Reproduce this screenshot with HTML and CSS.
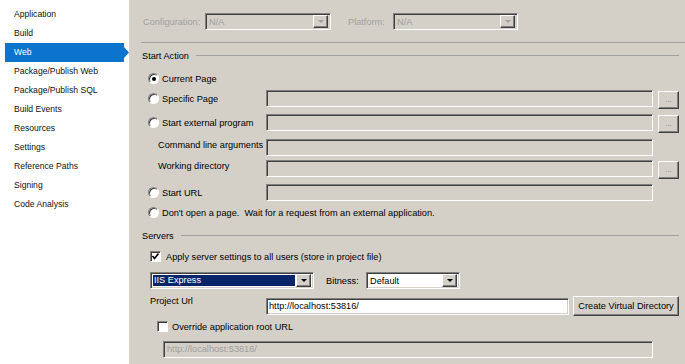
FILE: index.html
```html
<!DOCTYPE html>
<html lang="en">
<head>
    <meta charset="UTF-8">
    <meta name="viewport" content="width=device-width, initial-scale=1.0">
    <title>Web - Project Properties</title>
    <link rel="stylesheet" href="styles.css">
</head>
<body>

    <div class="window">
        <nav class="sidebar">
            <a class="nav-item">Application</a>
            <a class="nav-item">Build</a>
            <a class="nav-item active">Web</a>
            <a class="nav-item">Package/Publish Web</a>
            <a class="nav-item">Package/Publish SQL</a>
            <a class="nav-item">Build Events</a>
            <a class="nav-item">Resources</a>
            <a class="nav-item">Settings</a>
            <a class="nav-item">Reference Paths</a>
            <a class="nav-item">Signing</a>
            <a class="nav-item">Code Analysis</a>
        </nav>

        <main class="page">
            <div class="config-bar">
                <span class="config-label">Configuration:</span>
                <div class="combo disabled config-combo">
                    <span class="value">N/A</span>
                    <span class="drop"></span>
                </div>
                <span class="config-label platform-label">Platform:</span>
                <div class="combo disabled platform-combo">
                    <span class="value">N/A</span>
                    <span class="drop"></span>
                </div>
            </div>

            <div class="rule"></div>

            <div class="group-title start-title"><span>Start Action</span></div>

            <div class="action-row first">
                <label class="choice"><span class="radio checked"></span>Current Page</label>
            </div>
            <div class="action-row gap-s">
                <label class="choice"><span class="radio"></span>Specific Page</label>
                <div class="field"></div>
                <button class="browse">...</button>
            </div>
            <div class="action-row gap-m">
                <label class="choice"><span class="radio"></span>Start external program</label>
                <div class="field"></div>
                <button class="browse">...</button>
            </div>
            <div class="action-row gap-l">
                <span class="sublabel">Command line arguments</span>
                <div class="field"></div>
            </div>
            <div class="action-row gap-xs">
                <span class="sublabel">Working directory</span>
                <div class="field"></div>
                <button class="browse">...</button>
            </div>
            <div class="action-row gap-m">
                <label class="choice"><span class="radio"></span>Start URL</label>
                <div class="field"></div>
            </div>
            <div class="action-row gap-s">
                <label class="choice wide"><span class="radio"></span>Don't open a page.&nbsp; Wait for a request from an external application.</label>
            </div>

            <div class="group-title servers-title"><span>Servers</span></div>

            <div class="check-row apply-row">
                <span class="checkbox checked">
                    <svg width="9" height="9" viewBox="0 0 9 9"><path d="M1.5 4 L3.5 6.5 L7.5 1.5" fill="none" stroke="#000" stroke-width="1.6"/></svg>
                </span>
                Apply server settings to all users (store in project file)
            </div>

            <div class="server-row">
                <div class="combo selected server-combo">
                    <span class="value">IIS Express</span>
                    <span class="drop"></span>
                </div>
                <span class="bitness-label">Bitness:</span>
                <div class="combo white bitness-combo">
                    <span class="value">Default</span>
                    <span class="drop"></span>
                </div>
            </div>

            <div class="url-row">
                <span class="url-label">Project Url</span>
                <div class="field white url-field">http://localhost:53816/</div>
                <button class="push">Create Virtual Directory</button>
            </div>

            <div class="check-row override-row">
                <span class="checkbox"></span>
                Override application root URL
            </div>

            <div class="field root-field">http://localhost:53816/</div>
        </main>
    </div>

</body>
</html>
```

FILE: styles.css
```css
body {
    margin: 0;
    font-family: "Liberation Sans", Arial, sans-serif;
    font-size: 9.2px;
    color: #000;
}
.window {
    display: flex;
    width: 685px;
    height: 364px;
    overflow: hidden;
    background-color: #d4d0c8;
}
.sidebar {
    width: 129px;
    flex-shrink: 0;
    background-color: #fff;
    padding-top: 5px;
}
.nav-item {
    display: block;
    height: 19px;
    line-height: 19px;
    padding-left: 14px;
    font-size: 8.6px;
    color: #111;
}
.nav-item.active {
    margin-left: 5px;
    padding-left: 9px;
    background-color: #0c74cc;
    color: #fff;
    clip-path: polygon(0 0, 119px 0, 119px 4px, 124px 9.5px, 119px 15px, 119px 100%, 0 100%);
}
.page {
    flex: 1;
    padding: 13px 0 0 12px;
}

/* config bar */
.config-bar {
    display: flex;
    align-items: center;
    height: 17px;
}
.config-label {
    color: #a0a0a0;
    width: 64px;
    padding-left: 2px;
    box-sizing: border-box;
}
.platform-label {
    margin-left: 17px;
    width: 45px;
    padding-left: 0;
}
.config-combo {
    width: 126px;
}
.platform-combo {
    width: 125px;
}
.rule {
    margin-top: 12px;
    border-top: 1px solid #a0a0a0;
}

/* group headings */
.group-title {
    display: flex;
    align-items: center;
    height: 13px;
    padding-left: 1px;
    margin-right: 6px;
}
.group-title::after {
    content: "";
    flex: 1;
    border-top: 1px solid #a0a0a0;
    margin-left: 7px;
}
.start-title {
    margin-top: 6px;
}
.servers-title {
    margin-top: 8px;
}

/* sunken / raised widgets */
.field, .combo {
    box-sizing: border-box;
    height: 17px;
    border: 1px solid;
    border-color: #808080 #fff #fff #808080;
    box-shadow: inset 1px 1px #404040, inset -1px -1px #d4d0c8;
}
.field.white, .combo.white, .combo.selected {
    background-color: #fff;
}
.browse, .push, .drop {
    box-sizing: border-box;
    border: 1px solid;
    border-color: #fff #404040 #404040 #fff;
    box-shadow: inset -1px -1px #808080, inset 1px 1px #d4d0c8;
    background-color: #d4d0c8;
    font-family: inherit;
    padding: 0;
}
.combo {
    display: flex;
    align-items: center;
    padding: 0 2px 0 3px;
}
.combo .value {
    flex: 1;
}
.combo.disabled .value {
    color: #a0a0a0;
}
.combo.selected {
    padding-left: 2px;
}
.combo.selected .value {
    background-color: #0a246a;
    color: #fff;
    line-height: 11px;
    padding-left: 1px;
    margin-right: 1px;
}
.drop {
    position: relative;
    width: 15px;
    height: 13px;
}
.drop::after {
    content: "";
    position: absolute;
    left: 4px;
    top: 4px;
    border-left: 3px solid transparent;
    border-right: 3px solid transparent;
    border-top: 3px solid #000;
}
.combo.disabled .drop::after {
    border-top-color: #a0a0a0;
}

/* start action */
.action-row {
    display: flex;
    align-items: center;
    height: 17px;
}
.action-row.first { margin-top: 8px; }
.action-row.gap-xs { margin-top: 4px; }
.action-row.gap-s { margin-top: 3px; }
.action-row.gap-m { margin-top: 7px; }
.action-row.gap-l { margin-top: 8px; }
.choice {
    display: flex;
    align-items: center;
    width: 125px;
    padding-left: 7px;
    box-sizing: border-box;
    white-space: nowrap;
}
.choice.wide {
    width: auto;
}
.radio {
    position: relative;
    box-sizing: border-box;
    width: 11px;
    height: 11px;
    margin-right: 3px;
    border-radius: 50%;
    border: 1px solid;
    border-color: #808080 #fff #fff #808080;
    box-shadow: inset 1px 1px #404040;
    background-color: #fff;
}
.radio.checked::after {
    content: "";
    position: absolute;
    left: 3px;
    top: 3px;
    width: 4px;
    height: 4px;
    border-radius: 50%;
    background-color: #000;
}
.sublabel {
    align-self: flex-start;
    width: 125px;
    padding-left: 17px;
    box-sizing: border-box;
    line-height: 12px;
    white-space: nowrap;
}
.action-row .field {
    width: 387px;
}
.browse {
    width: 21px;
    height: 18px;
    margin-left: 5px;
    margin-top: 2px;
    font-size: 8px;
    color: #808080;
    line-height: 14px;
}

/* servers */
.check-row {
    display: flex;
    align-items: center;
    height: 17px;
}
.apply-row {
    margin-top: 6px;
    padding-left: 9px;
}
.override-row {
    margin-top: 2px;
    padding-left: 16px;
}
.checkbox {
    box-sizing: border-box;
    width: 11px;
    height: 11px;
    margin-right: 5px;
    border: 1px solid;
    border-color: #808080 #fff #fff #808080;
    box-shadow: inset 1px 1px #404040;
    background-color: #fff;
    display: flex;
    align-items: center;
    justify-content: center;
}
.override-row .checkbox {
    margin-right: 4px;
}
.server-row {
    display: flex;
    align-items: center;
    height: 17px;
    margin-top: 7px;
    padding-left: 9px;
}
.server-combo {
    width: 164px;
}
.bitness-label {
    margin-left: 12px;
    width: 40px;
}
.bitness-combo {
    width: 94px;
}
.url-row {
    display: flex;
    align-items: center;
    height: 20px;
    margin-top: 7px;
    padding-left: 9px;
}
.url-label {
    align-self: flex-start;
    width: 116px;
    line-height: 11px;
}
.url-field {
    width: 303px;
    line-height: 15px;
    padding-left: 2px;
}
.push {
    width: 106px;
    height: 20px;
    margin-left: 4px;
    font-size: 9.2px;
    color: #000;
}
.root-field {
    width: 490px;
    margin: 6px 0 0 22px;
    line-height: 15px;
    padding-left: 3px;
    color: #a0a0a0;
}
```
